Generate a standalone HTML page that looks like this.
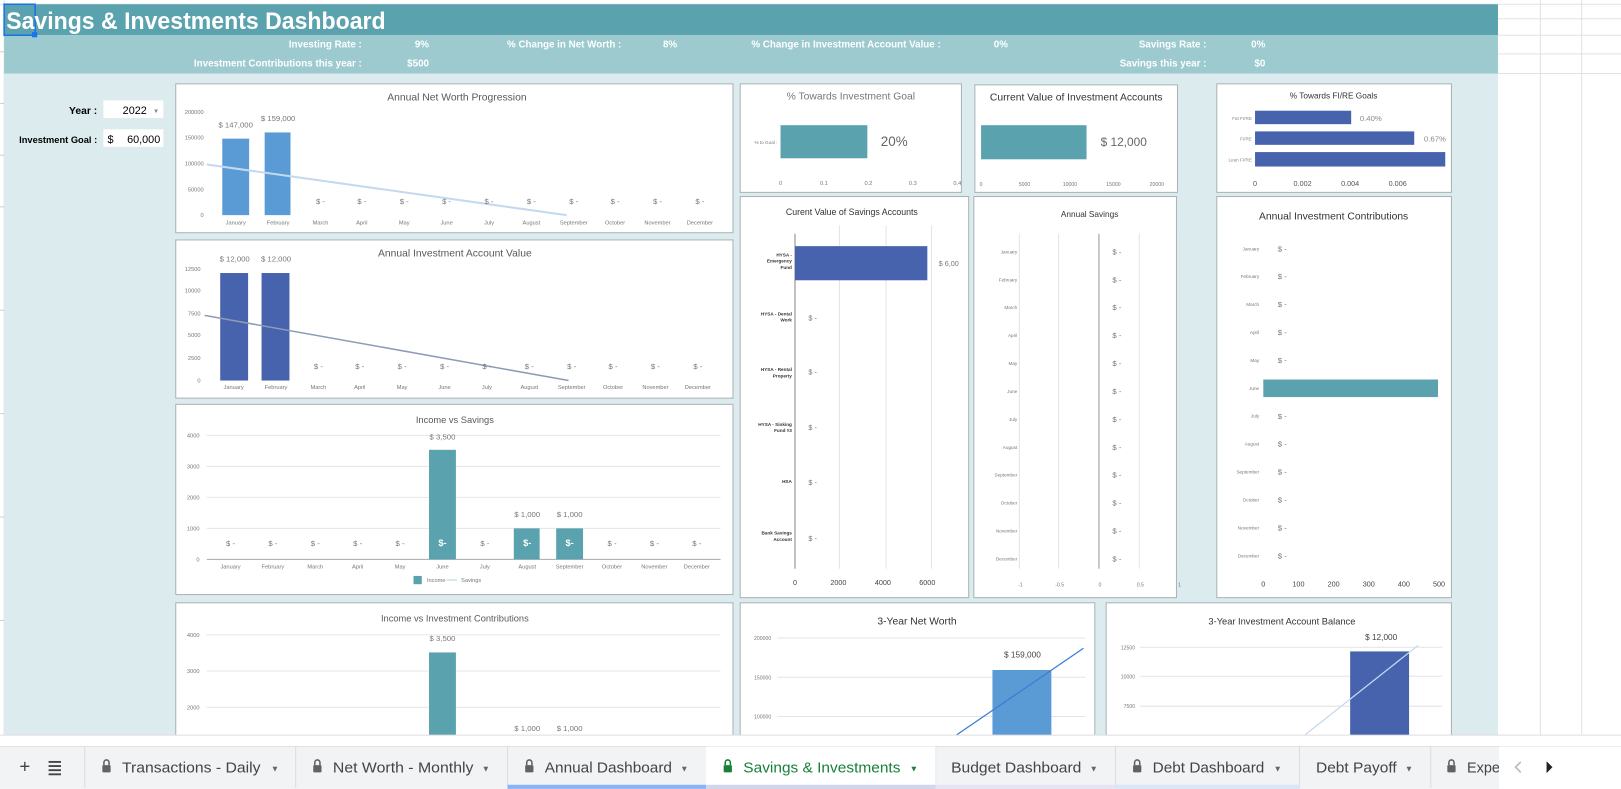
<!DOCTYPE html>
<html><head><meta charset="utf-8"><style>
html,body{margin:0;padding:0;background:#fff;overflow:hidden}
svg{display:block}
text{font-family:"Liberation Sans",sans-serif}
</style></head><body>
<svg width="1621" height="789" viewBox="0 0 1568 763" xmlns="http://www.w3.org/2000/svg">
<defs>
<g id="lock"><rect x="-4" y="-1" width="8" height="7" rx="1" fill="#5f6368"/><path d="M-2.5 -1 V-3.5 A2.5 2.5 0 0 1 2.5 -3.5 V-1" fill="none" stroke="#5f6368" stroke-width="1.5"/></g>
</defs>
<rect width="1568" height="763" fill="#fff"/>
<g stroke="#e2e2e2" stroke-width="1">
<line x1="0" y1="4" x2="1568" y2="4"/>
<line x1="1449" y1="18" x2="1568" y2="18"/><line x1="1449" y1="34" x2="1568" y2="34"/><line x1="1449" y1="52" x2="1568" y2="52"/><line x1="1449" y1="71" x2="1568" y2="71"/>
<line x1="1490" y1="0" x2="1490" y2="711"/><line x1="1530" y1="0" x2="1530" y2="711"/>
<line x1="4" y1="0" x2="4" y2="711"/>
</g>
<g stroke="#d0d0d0"><line x1="0" y1="50" x2="4" y2="50"/><line x1="0" y1="100" x2="4" y2="100"/><line x1="0" y1="150" x2="4" y2="150"/><line x1="0" y1="200" x2="4" y2="200"/><line x1="0" y1="300" x2="4" y2="300"/><line x1="0" y1="400" x2="4" y2="400"/><line x1="0" y1="500" x2="4" y2="500"/><line x1="0" y1="600" x2="4" y2="600"/></g>
<rect x="4" y="4" width="1445" height="30" fill="#5aa2ad"/>
<rect x="4" y="34" width="1445" height="37" fill="#9ccacf"/>
<rect x="4" y="71" width="1445" height="640" fill="#dcebee"/>
<rect x="4" y="4" width="30" height="30" fill="none" stroke="#1a73e8" stroke-width="1.5"/>
<rect x="31" y="31" width="5" height="5" fill="#1a73e8"/>
<text x="6" y="28" font-size="23" font-weight="bold" fill="#fff" textLength="367" lengthAdjust="spacingAndGlyphs">Savings &amp; Investments Dashboard</text>
<g font-size="9.5" font-weight="bold" fill="#fff">
<text x="350" y="46" text-anchor="end">Investing Rate :</text>
<text x="415" y="46" text-anchor="end">9%</text>
<text x="601" y="46" text-anchor="end">% Change in Net Worth :</text>
<text x="655" y="46" text-anchor="end">8%</text>
<text x="910" y="46" text-anchor="end">% Change in Investment Account Value :</text>
<text x="975" y="46" text-anchor="end">0%</text>
<text x="1167" y="46" text-anchor="end">Savings Rate :</text>
<text x="1224" y="46" text-anchor="end">0%</text>
<text x="350" y="64" text-anchor="end">Investment Contributions this year :</text>
<text x="415" y="64" text-anchor="end">$500</text>
<text x="1167" y="64" text-anchor="end">Savings this year :</text>
<text x="1224" y="64" text-anchor="end">$0</text>
</g>
<text x="94" y="110" font-size="10" font-weight="bold" text-anchor="end" fill="#000">Year :</text>
<rect x="100" y="97" width="58" height="17" fill="#fff"/>
<text x="142" y="110" font-size="10.5" text-anchor="end">2022</text>
<text x="151" y="109" font-size="6" fill="#888" text-anchor="middle">▼</text>
<text x="94" y="138" font-size="9" font-weight="bold" text-anchor="end">Investment Goal :</text>
<rect x="100" y="125" width="58" height="17" fill="#fff"/>
<text x="104" y="138" font-size="10.5">$</text><text x="155" y="138" font-size="10.5" text-anchor="end">60,000</text>

<g fill="#fff" stroke="#a9b4b8" stroke-width="1">
<rect x="170" y="81" width="539" height="144"/>
<rect x="170" y="232" width="539" height="153"/>
<rect x="170" y="391" width="539" height="184"/>
<rect x="170" y="583" width="539" height="140"/>
<rect x="716" y="81" width="214" height="105"/>
<rect x="943" y="82" width="196" height="104"/>
<rect x="1177" y="81" width="227" height="105"/>
<rect x="716" y="190" width="221" height="388"/>
<rect x="942" y="190" width="196" height="388"/>
<rect x="1177" y="190" width="227" height="388"/>
<rect x="716" y="583" width="343" height="140"/>
<rect x="1070" y="583" width="334" height="140"/>
</g>

<g font-size="5.5" fill="#777">
<text x="442" y="97" font-size="10" fill="#595959" text-anchor="middle">Annual Net Worth Progression</text>
<text x="197" y="110" text-anchor="end">200000</text><text x="197" y="135" text-anchor="end">150000</text><text x="197" y="160" text-anchor="end">100000</text><text x="197" y="185" text-anchor="end">50000</text><text x="197" y="210" text-anchor="end">0</text>
<rect x="215" y="134" width="26" height="74" fill="#5b9bd5"/><rect x="256" y="128" width="25" height="80" fill="#5b9bd5"/>
<text x="228" y="123" font-size="7.5" text-anchor="middle">$ 147,000</text><text x="269" y="117" font-size="7.5" text-anchor="middle">$ 159,000</text>
<line x1="200" y1="159" x2="548" y2="208" stroke="#c5d9ee" stroke-width="2"/>
<g font-size="7.5" text-anchor="middle"><text x="310" y="197">$ -</text><text x="350" y="197">$ -</text><text x="391" y="197">$ -</text><text x="432" y="197">$ -</text><text x="473" y="197">$ -</text><text x="514" y="197">$ -</text><text x="555" y="197">$ -</text><text x="595" y="197">$ -</text><text x="636" y="197">$ -</text><text x="677" y="197">$ -</text></g>
<g text-anchor="middle"><text x="228" y="217">January</text><text x="269" y="217">February</text><text x="310" y="217">March</text><text x="350" y="217">April</text><text x="391" y="217">May</text><text x="432" y="217">June</text><text x="473" y="217">July</text><text x="514" y="217">August</text><text x="555" y="217">September</text><text x="595" y="217">October</text><text x="636" y="217">November</text><text x="677" y="217">December</text></g>
</g>
<g font-size="5.5" fill="#777">
<text x="440" y="248" font-size="10" fill="#595959" text-anchor="middle">Annual Investment Account Value</text>
<text x="194" y="262" text-anchor="end">12500</text><text x="194" y="283" text-anchor="end">10000</text><text x="194" y="305" text-anchor="end">7500</text><text x="194" y="326" text-anchor="end">5000</text><text x="194" y="348" text-anchor="end">2500</text><text x="194" y="370" text-anchor="end">0</text>
<rect x="213" y="264" width="27" height="104" fill="#4763ad"/><rect x="253" y="264" width="27" height="104" fill="#4763ad"/>
<text x="227" y="253" font-size="7.5" text-anchor="middle">$ 12,000</text><text x="267" y="253" font-size="7.5" text-anchor="middle">$ 12,000</text>
<line x1="198" y1="305" x2="550" y2="368" stroke="#8d9cb6" stroke-width="1.5"/>
<g font-size="7.5" text-anchor="middle"><text x="308" y="357">$ -</text><text x="348" y="357">$ -</text><text x="389" y="357">$ -</text><text x="430" y="357">$ -</text><text x="471" y="357">$ -</text><text x="512" y="357">$ -</text><text x="553" y="357">$ -</text><text x="593" y="357">$ -</text><text x="634" y="357">$ -</text><text x="675" y="357">$ -</text></g>
<g text-anchor="middle"><text x="226" y="376">January</text><text x="267" y="376">February</text><text x="308" y="376">March</text><text x="348" y="376">April</text><text x="389" y="376">May</text><text x="430" y="376">June</text><text x="471" y="376">July</text><text x="512" y="376">August</text><text x="553" y="376">September</text><text x="593" y="376">October</text><text x="634" y="376">November</text><text x="675" y="376">December</text></g>
</g>
<g font-size="5.5" fill="#777">
<text x="440" y="409" font-size="9" fill="#595959" text-anchor="middle">Income vs Savings</text>
<g stroke="#e4e4e4"><line x1="200" y1="421" x2="697" y2="421"/><line x1="200" y1="451" x2="697" y2="451"/><line x1="200" y1="481" x2="697" y2="481"/><line x1="200" y1="511" x2="697" y2="511"/></g>
<line x1="200" y1="541" x2="697" y2="541" stroke="#aaa"/>
<text x="193" y="423" text-anchor="end">4000</text><text x="193" y="453" text-anchor="end">3000</text><text x="193" y="483" text-anchor="end">2000</text><text x="193" y="513" text-anchor="end">1000</text><text x="193" y="543" text-anchor="end">0</text>
<rect x="415" y="435" width="26" height="106" fill="#5aa2ad"/><rect x="497" y="511" width="25" height="30" fill="#5aa2ad"/><rect x="538" y="511" width="26" height="30" fill="#5aa2ad"/>
<text x="428" y="425" font-size="7.5" text-anchor="middle">$ 3,500</text><text x="510" y="500" font-size="7.5" text-anchor="middle">$ 1,000</text><text x="551" y="500" font-size="7.5" text-anchor="middle">$ 1,000</text>
<g font-size="7.5" text-anchor="middle"><text x="223" y="528">$ -</text><text x="264" y="528">$ -</text><text x="305" y="528">$ -</text><text x="346" y="528">$ -</text><text x="387" y="528">$ -</text><text x="469" y="528">$ -</text><text x="592" y="528">$ -</text><text x="633" y="528">$ -</text><text x="674" y="528">$ -</text></g>
<g font-size="9" fill="#fff" font-weight="bold" text-anchor="middle"><text x="428" y="528">$-</text><text x="510" y="528">$-</text><text x="551" y="528">$-</text></g>
<g text-anchor="middle"><text x="223" y="550">January</text><text x="264" y="550">February</text><text x="305" y="550">March</text><text x="346" y="550">April</text><text x="387" y="550">May</text><text x="428" y="550">June</text><text x="469" y="550">July</text><text x="510" y="550">August</text><text x="551" y="550">September</text><text x="592" y="550">October</text><text x="633" y="550">November</text><text x="674" y="550">December</text></g>
<rect x="400" y="557" width="8" height="8" fill="#5aa2ad"/><text x="413" y="563">Income</text>
<line x1="432" y1="561" x2="442" y2="561" stroke="#c9e8cf" stroke-width="1.5"/><text x="446" y="563">Savings</text>
</g>
<g font-size="5.5" fill="#777">
<text x="440" y="601" font-size="9" fill="#595959" text-anchor="middle">Income vs Investment Contributions</text>
<g stroke="#e4e4e4"><line x1="200" y1="614" x2="697" y2="614"/><line x1="200" y1="649" x2="697" y2="649"/><line x1="200" y1="684" x2="697" y2="684"/></g>
<text x="193" y="616" text-anchor="end">4000</text><text x="193" y="651" text-anchor="end">3000</text><text x="193" y="686" text-anchor="end">2000</text>
<rect x="415" y="631" width="26" height="80" fill="#5aa2ad"/>
<text x="428" y="620" font-size="7.5" text-anchor="middle">$ 3,500</text>
<text x="510" y="707" font-size="7.5" text-anchor="middle">$ 1,000</text><text x="551" y="707" font-size="7.5" text-anchor="middle">$ 1,000</text>
</g>
<g font-size="5.5" fill="#777">
<text x="823" y="96" font-size="10" fill="#777" text-anchor="middle">% Towards Investment Goal</text>
<text x="752" y="139" font-size="4.5" text-anchor="end">% to Goal :</text>
<rect x="755" y="121" width="84" height="32" fill="#5aa2ad"/>
<text x="865" y="141" font-size="13" fill="#666" text-anchor="middle">20%</text>
<text x="755" y="179" text-anchor="middle">0</text><text x="797" y="179" text-anchor="middle">0.1</text><text x="840" y="179" text-anchor="middle">0.2</text><text x="883" y="179" text-anchor="middle">0.3</text><text x="926" y="179" text-anchor="middle">0.4</text>
</g>
<g font-size="5" fill="#777">
<text x="1041" y="97" font-size="10" fill="#333" text-anchor="middle">Current Value of Investment Accounts</text>
<rect x="949" y="121" width="102" height="33" fill="#5aa2ad"/>
<text x="1087" y="141" font-size="11.5" fill="#666" text-anchor="middle">$ 12,000</text>
<text x="949" y="180" text-anchor="middle">0</text><text x="991" y="180" text-anchor="middle">5000</text><text x="1035" y="180" text-anchor="middle">10000</text><text x="1077" y="180" text-anchor="middle">15000</text><text x="1119" y="180" text-anchor="middle">20000</text>
</g>
<g font-size="5" fill="#888">
<text x="1290" y="95" font-size="8" fill="#333" text-anchor="middle">% Towards FI/RE Goals</text>
<text x="1211" y="116" font-size="4.5" text-anchor="end">Fat FI/RE</text><text x="1211" y="136" font-size="4.5" text-anchor="end">FI/RE</text><text x="1211" y="156" font-size="4.5" text-anchor="end">Lean FI/RE</text>
<rect x="1214" y="107" width="93" height="13" fill="#4763ad"/><rect x="1214" y="127" width="154" height="13" fill="#4763ad"/><rect x="1214" y="147" width="184" height="14" fill="#4763ad"/>
<text x="1326" y="117" font-size="7.5" text-anchor="middle">0.40%</text><text x="1388" y="137" font-size="7.5" text-anchor="middle">0.67%</text>
<g font-size="7" fill="#555" text-anchor="middle"><text x="1214" y="180">0</text><text x="1260" y="180">0.002</text><text x="1306" y="180">0.004</text><text x="1352" y="180">0.006</text></g>
</g>
<g font-size="4.5" fill="#333" font-weight="bold">
<text x="824" y="208" font-size="8.5" font-weight="normal" fill="#333" text-anchor="middle">Curent Value of Savings Accounts</text>
<g stroke="#e4e4e4"><line x1="812" y1="218" x2="812" y2="550"/><line x1="857" y1="218" x2="857" y2="550"/><line x1="901" y1="218" x2="901" y2="550"/></g>
<line x1="769" y1="226" x2="769" y2="550" stroke="#888"/>
<rect x="769" y="238" width="128" height="33" fill="#4763ad"/>
<g text-anchor="end"><text x="766" y="248">HYSA -</text><text x="766" y="254">Emergency</text><text x="766" y="260">Fund</text>
<text x="766" y="305">HYSA - Dental</text><text x="766" y="311">Work</text>
<text x="766" y="359">HYSA - Rental</text><text x="766" y="365">Property</text>
<text x="766" y="412">HYSA - Sinking</text><text x="766" y="418">Fund #3</text>
<text x="766" y="467">HSA</text>
<text x="766" y="517">Bank Savings</text><text x="766" y="523">Account</text></g>
<g font-size="7" font-weight="normal" fill="#777"><text x="908" y="257">$ 6,00</text><text x="782" y="310">$ -</text><text x="782" y="362">$ -</text><text x="782" y="416">$ -</text><text x="782" y="469">$ -</text><text x="782" y="523">$ -</text></g>
<g font-size="7" font-weight="normal" fill="#444" text-anchor="middle"><text x="769" y="566">0</text><text x="811" y="566">2000</text><text x="854" y="566">4000</text><text x="897" y="566">6000</text></g>
</g>
<g font-size="4.5" fill="#777">
<text x="1054" y="210" font-size="8" fill="#333" text-anchor="middle">Annual Savings</text>
<g stroke="#e4e4e4"><line x1="1024" y1="226" x2="1024" y2="550"/><line x1="1102" y1="226" x2="1102" y2="550"/><line x1="1141" y1="226" x2="1141" y2="550"/><line x1="986" y1="226" x2="986" y2="550"/></g>
<line x1="1063" y1="226" x2="1063" y2="550" stroke="#999"/>
<g text-anchor="end"><text x="984" y="245">January</text><text x="984" y="272">February</text><text x="984" y="299">March</text><text x="984" y="326">April</text><text x="984" y="353">May</text><text x="984" y="380">June</text><text x="984" y="407">July</text><text x="984" y="434">August</text><text x="984" y="461">September</text><text x="984" y="488">October</text><text x="984" y="515">November</text><text x="984" y="542">December</text></g>
<g font-size="7.5"><text x="1076" y="246">$ -</text><text x="1076" y="273">$ -</text><text x="1076" y="300">$ -</text><text x="1076" y="327">$ -</text><text x="1076" y="354">$ -</text><text x="1076" y="381">$ -</text><text x="1076" y="408">$ -</text><text x="1076" y="435">$ -</text><text x="1076" y="462">$ -</text><text x="1076" y="489">$ -</text><text x="1076" y="516">$ -</text><text x="1076" y="543">$ -</text></g>
<g text-anchor="middle" font-size="5"><text x="987" y="567">-1</text><text x="1025" y="567">-0.5</text><text x="1064" y="567">0</text><text x="1103" y="567">0.5</text><text x="1141" y="567">1</text></g>
</g>
<g font-size="4.5" fill="#777">
<text x="1290" y="212" font-size="10" fill="#333" text-anchor="middle">Annual Investment Contributions</text>
<g text-anchor="end"><text x="1218" y="242">January</text><text x="1218" y="269">February</text><text x="1218" y="296">March</text><text x="1218" y="323">April</text><text x="1218" y="350">May</text><text x="1218" y="377">June</text><text x="1218" y="404">July</text><text x="1218" y="431">August</text><text x="1218" y="458">September</text><text x="1218" y="485">October</text><text x="1218" y="512">November</text><text x="1218" y="539">December</text></g>
<g font-size="7.5"><text x="1236" y="243">$ -</text><text x="1236" y="270">$ -</text><text x="1236" y="297">$ -</text><text x="1236" y="324">$ -</text><text x="1236" y="351">$ -</text><text x="1236" y="405">$ -</text><text x="1236" y="432">$ -</text><text x="1236" y="459">$ -</text><text x="1236" y="486">$ -</text><text x="1236" y="513">$ -</text><text x="1236" y="540">$ -</text></g>
<rect x="1222" y="367" width="169" height="17" fill="#5aa2ad"/>
<g text-anchor="middle" font-size="7" fill="#444"><text x="1222" y="567">0</text><text x="1256" y="567">100</text><text x="1290" y="567">200</text><text x="1324" y="567">300</text><text x="1358" y="567">400</text><text x="1392" y="567">500</text></g>
</g>
<g font-size="5" fill="#777">
<text x="887" y="604" font-size="10" fill="#333" text-anchor="middle">3-Year Net Worth</text>
<g stroke="#e4e4e4"><line x1="752" y1="617" x2="1050" y2="617"/><line x1="752" y1="655" x2="1050" y2="655"/><line x1="752" y1="693" x2="1050" y2="693"/></g>
<text x="746" y="619" text-anchor="end">200000</text><text x="746" y="657" text-anchor="end">150000</text><text x="746" y="695" text-anchor="end">100000</text>
<rect x="960" y="648" width="57" height="70" fill="#5b9bd5"/>
<text x="989" y="636" font-size="8" fill="#444" text-anchor="middle">$ 159,000</text>
<line x1="925" y1="711" x2="1048" y2="627" stroke="#3a7bd5" stroke-width="1.2"/>
</g>
<g font-size="5" fill="#777">
<text x="1240" y="604" font-size="9" fill="#333" text-anchor="middle">3-Year Investment Account Balance</text>
<g stroke="#e4e4e4"><line x1="1103" y1="626" x2="1395" y2="626"/><line x1="1103" y1="654" x2="1395" y2="654"/><line x1="1103" y1="683" x2="1395" y2="683"/></g>
<text x="1098" y="628" text-anchor="end">12500</text><text x="1098" y="656" text-anchor="end">10000</text><text x="1098" y="685" text-anchor="end">7500</text>
<rect x="1306" y="630" width="57" height="90" fill="#4763ad"/>
<text x="1336" y="619" font-size="8" fill="#444" text-anchor="middle">$ 12,000</text>
<line x1="1262" y1="711" x2="1372" y2="624" stroke="#c5d9ee" stroke-width="1.2"/>
</g>

<rect x="0" y="711" width="1568" height="52" fill="#fff"/>
<line x1="0" y1="711" x2="1568" y2="711" stroke="#ddd"/>
<rect x="0" y="722" width="1568" height="41" fill="#f1f3f4"/>
<line x1="0" y1="722" x2="1568" y2="722" stroke="#e0e0e0"/>
<g stroke="#dadce0"><line x1="82" y1="722" x2="82" y2="762"/><line x1="286" y1="722" x2="286" y2="762"/><line x1="491" y1="722" x2="491" y2="762"/><line x1="905" y1="722" x2="905" y2="762"/><line x1="1079" y1="722" x2="1079" y2="762"/><line x1="1257" y1="722" x2="1257" y2="762"/><line x1="1384" y1="722" x2="1384" y2="762"/></g>
<rect x="683" y="722" width="222" height="40" fill="#fff"/>
<rect x="491" y="759" width="192" height="4" fill="#8ab4f8"/>
<rect x="683" y="759" width="222" height="4" fill="#d2d6ea"/>
<rect x="905" y="759" width="174" height="4" fill="#e6e4f4"/>
<rect x="1079" y="759" width="178" height="4" fill="#dbe6f7"/>
<text x="24" y="747" font-size="18" fill="#444" text-anchor="middle">+</text>
<g fill="#444"><rect x="47" y="736" width="12" height="1.8"/><rect x="47" y="740" width="12" height="1.8"/><rect x="47" y="744" width="12" height="1.8"/><rect x="47" y="748" width="12" height="1.8"/></g>
<g font-size="14" fill="#444">
<use href="#lock" x="103" y="741"/><text x="118" y="747" textLength="134" lengthAdjust="spacingAndGlyphs">Transactions - Daily</text><text x="262" y="746" font-size="8" fill="#666">▼</text>
<use href="#lock" x="307" y="741"/><text x="322" y="747" textLength="136" lengthAdjust="spacingAndGlyphs">Net Worth - Monthly</text><text x="466" y="746" font-size="8" fill="#666">▼</text>
<use href="#lock" x="512" y="741"/><text x="527" y="747" textLength="123" lengthAdjust="spacingAndGlyphs">Annual Dashboard</text><text x="658" y="746" font-size="8" fill="#666">▼</text>
<g transform="translate(704 741)"><rect x="-4" y="-1" width="8" height="7" rx="1" fill="#188038"/><path d="M-2.5 -1 V-3.5 A2.5 2.5 0 0 1 2.5 -3.5 V-1" fill="none" stroke="#188038" stroke-width="1.5"/></g>
<text x="719" y="747" fill="#188038" textLength="152" lengthAdjust="spacingAndGlyphs">Savings &amp; Investments</text><text x="880" y="746" font-size="8" fill="#188038">▼</text>
<text x="920" y="747" textLength="126" lengthAdjust="spacingAndGlyphs">Budget Dashboard</text><text x="1054" y="746" font-size="8" fill="#666">▼</text>
<use href="#lock" x="1100" y="741"/><text x="1115" y="747" textLength="108" lengthAdjust="spacingAndGlyphs">Debt Dashboard</text><text x="1232" y="746" font-size="8" fill="#666">▼</text>
<text x="1273" y="747" textLength="78" lengthAdjust="spacingAndGlyphs">Debt Payoff</text><text x="1359" y="746" font-size="8" fill="#666">▼</text>
<use href="#lock" x="1404" y="741"/><text x="1419" y="747">Expe</text>
</g>
<rect x="1450" y="722" width="118" height="41" fill="#fff"/>
<path d="M1471 737 L1466 742 L1471 747" fill="none" stroke="#bbb" stroke-width="1.6"/>
<path d="M1496 737 L1501 742 L1496 747" fill="#222" stroke="#222" stroke-width="1"/>
</svg>
</body></html>
